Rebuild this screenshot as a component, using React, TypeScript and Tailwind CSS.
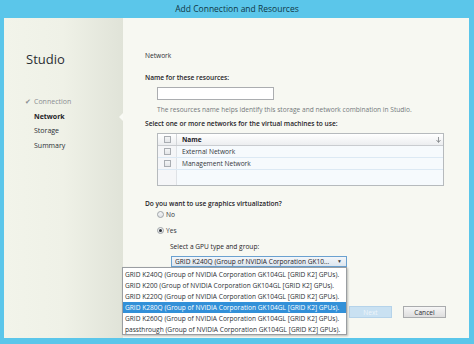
import React from 'react';

const gpuOptions = [
  'GRID K240Q (Group of NVIDIA Corporation GK104GL [GRID K2] GPUs).',
  'GRID K200 (Group of NVIDIA Corporation GK104GL [GRID K2] GPUs).',
  'GRID K220Q (Group of NVIDIA Corporation GK104GL [GRID K2] GPUs).',
  'GRID K280Q (Group of NVIDIA Corporation GK104GL [GRID K2] GPUs).',
  'GRID K260Q (Group of NVIDIA Corporation GK104GL [GRID K2] GPUs).',
  'passthrough (Group of NVIDIA Corporation GK104GL [GRID K2] GPUs).',
];

const Checkbox: React.FC = () => (
  <span className="block w-[7px] h-[7px] border border-[#a9adb2] bg-gradient-to-b from-[#f4f5f6] to-[#e3e5e8]" />
);

const Radio: React.FC<{ checked?: boolean }> = ({ checked }) => (
  <span className="flex items-center justify-center w-[7px] h-[7px] rounded-full border border-[#9ea3a8] bg-gradient-to-b from-[#f4f5f6] to-[#e1e3e6]">
    {checked && <span className="block w-[3px] h-[3px] rounded-full bg-[#2a2f35]" />}
  </span>
);

const App: React.FC = () => {
  const selected = 3;

  return (
    <div className="w-[474px] h-[344px] bg-[#5bc6ea] flex flex-col font-['Open_Sans','Segoe_UI',sans-serif] text-[#1f2328] overflow-hidden">
      {/* title bar */}
      <div className="h-[18px] flex items-center justify-center text-[8.5px] text-[#103846]">
        Add Connection and Resources
      </div>

      <div className="flex-1 flex ml-[4px] mr-[5px] mb-[6px] bg-[#f7f8f2]">
        {/* sidebar */}
        <div className="relative w-[119px] shrink-0 pl-[21px] pt-[33px] bg-gradient-to-r from-[#f2f4ea] via-[#eff1e7] to-[#e0e3d8]">
          <div className="ml-[1px] text-[13px] leading-[16px] text-[#2a2e33]">Studio</div>
          <div className="mt-[28px] text-[7px] leading-[14.5px]">
            <div className="flex items-center text-[#8a8e92]">
              <span className="w-[9px] text-[7px] text-[#8a8e92]">✔</span>Connection
            </div>
            <div className="flex items-center font-bold text-[#1f2328]">
              <span className="w-[9px]" />Network
            </div>
            <div className="flex items-center text-[#2a2e33]">
              <span className="w-[9px]" />Storage
            </div>
            <div className="flex items-center text-[#2a2e33]">
              <span className="w-[9px]" />Summary
            </div>
          </div>
          {/* notch marker */}
          <span className="absolute right-0 top-[95px] w-0 h-0 border-y-[4px] border-y-transparent border-r-[4px] border-r-[#f9faf5]" />
        </div>

        {/* content */}
        <div className="relative flex-1 flex flex-col pl-[22px] pt-[32px] text-[6.6px] leading-[11px]">
          <div className="text-[#2a2e33]">Network</div>
          <div className="mt-[11px] font-semibold text-[#1f2328]">Name for these resources:</div>
          <div className="mt-[4px] ml-[12px] w-[117px] h-[13px] border border-[#abadb0] bg-white" />
          <div className="mt-[4px] ml-[12px] text-[#74787c]">
            The resources name helps identify this storage and network combination in Studio.
          </div>
          <div className="mt-[3px] font-semibold text-[#1f2328]">
            Select one or more networks for the virtual machines to use:
          </div>

          {/* networks table */}
          <div className="mt-[4px] ml-[12px] w-[287px] h-[53px] border border-[#b6babd] bg-white flex flex-col">
            <div className="h-[12px] flex items-stretch border-b border-[#c9ccd0] bg-gradient-to-b from-[#ffffff] to-[#eceef0]">
              <div className="w-[19px] flex items-center justify-center border-r border-[#d3d6d9]">
                <Checkbox />
              </div>
              <div className="flex-1 pl-[5px] flex items-center font-bold text-[#1f2328]">Name</div>
              <div className="w-[10px] flex items-center justify-center">
                <svg width="5" height="6" viewBox="0 0 5 6" className="text-[#7a7e82]">
                  <path d="M2.5 0v5M0.5 3l2 2.5 2-2.5" stroke="currentColor" strokeWidth="0.8" fill="none" />
                </svg>
              </div>
            </div>
            {['External Network', 'Management Network'].map((n) => (
              <div key={n} className="h-[12px] flex items-stretch border-b border-[#dce9f4]">
                <div className="w-[19px] flex items-center justify-center bg-[#f5f6f8] border-r border-[#dfe2e6]">
                  <Checkbox />
                </div>
                <div className="flex-1 pl-[5px] flex items-center text-[#33373b] bg-[#f6fafd]">{n}</div>
              </div>
            ))}
            <div className="flex-1 flex">
              <div className="w-[19px] bg-[#f5f6f8] border-r border-[#dfe2e6]" />
              <div className="flex-1 bg-[#f6fafd]" />
            </div>
          </div>

          <div className="mt-[12px] font-semibold text-[#1f2328]">Do you want to use graphics virtualization?</div>
          <div className="ml-[12px] flex items-center gap-[2px]">
            <Radio />
            <span className="text-[#33373b]">No</span>
          </div>
          <div className="mt-[5px] ml-[12px] flex items-center gap-[2px]">
            <Radio checked />
            <span className="text-[#33373b]">Yes</span>
          </div>
          <div className="mt-[5px] ml-[25px] text-[#1f2328]">Select a GPU type and group:</div>

          {/* gpu select */}
          <div className="relative mt-[4px] ml-[26px] w-[176px] h-[11px]">
            <div className="h-full flex items-center border border-[#6aa1d0] bg-gradient-to-b from-[#f3f6f9] to-[#dde6ef] pl-[3px] pr-[4px] text-[#1f2328]">
              <span className="flex-1 whitespace-nowrap overflow-hidden">GRID K240Q (Group of NVIDIA Corporation GK10...</span>
              <span className="text-[5px] text-[#3a3f44]">▼</span>
            </div>
            <div className="absolute left-[-49px] top-full w-[225px] h-[68px] py-[1px] border border-[#9a9ea2] bg-white shadow-[1px_1px_2px_rgba(0,0,0,0.25)] z-10">
              {gpuOptions.map((o, i) => (
                <div
                  key={o}
                  className={
                    i === selected
                      ? 'h-[11px] pl-[2px] flex items-center whitespace-nowrap bg-[#3290d8] text-white'
                      : 'h-[11px] pl-[2px] flex items-center whitespace-nowrap text-[#2c3034]'
                  }
                >
                  {o}
                </div>
              ))}
            </div>
          </div>

          {/* footer buttons */}
          <div className="mt-auto mb-[20px] mr-[23px] flex justify-end gap-[11px]">
            <div className="w-[43px] h-[12px] flex items-center justify-center border border-[#b5d3ea] bg-[#c9e1f2] text-[#eef5fa]">
              Next
            </div>
            <div className="w-[43px] h-[12px] flex items-center justify-center border border-[#a9abad] bg-gradient-to-b from-[#f6f6f6] to-[#dedede] text-[#2c3034]">
              Cancel
            </div>
          </div>
        </div>
      </div>
    </div>
  );
};

export default App;
